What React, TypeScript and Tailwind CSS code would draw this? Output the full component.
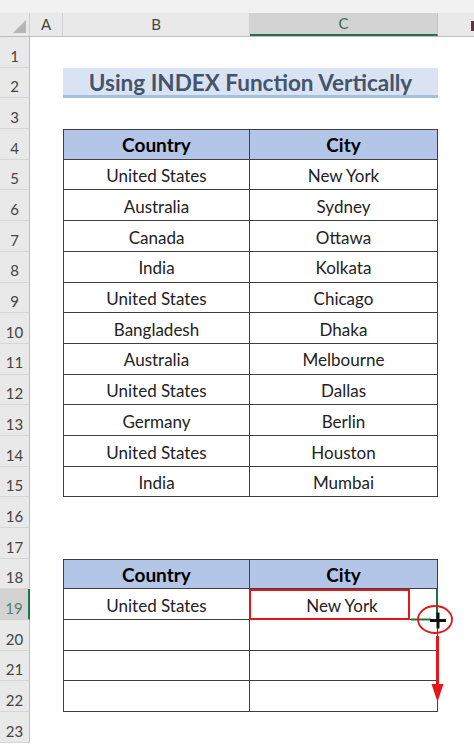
import React from "react";

const top = [
  ["United States", "New York"],
  ["Australia", "Sydney"],
  ["Canada", "Ottawa"],
  ["India", "Kolkata"],
  ["United States", "Chicago"],
  ["Bangladesh", "Dhaka"],
  ["Australia", "Melbourne"],
  ["United States", "Dallas"],
  ["Germany", "Berlin"],
  ["United States", "Houston"],
  ["India", "Mumbai"],
];

function Row({ n, active, children }: { n: number; active?: boolean; children?: React.ReactNode }) {
  return (
    <div className="flex h-[30.7px] shrink-0">
      <div
        className={
          active
            ? "w-[30px] shrink-0 flex items-center justify-center pt-[8px] border-b border-b-[#d0d0d0] border-r-2 border-r-[#217346] bg-[#d3d3d3] text-[#5c7c68] text-[15px]"
            : "w-[30px] shrink-0 flex items-center justify-center pt-[8px] border-b border-b-[#d6d6d6] border-r border-r-[#bdbdbd] bg-[#e9e9e9] text-[#444] text-[15px]"
        }
      >
        {n}
      </div>
      <div className="w-[33px] shrink-0" />
      {children}
    </div>
  );
}

function HeadCells({ first }: { first?: boolean }) {
  return (
    <>
      <div
        className={
          "w-[187px] shrink-0 flex items-center justify-center pt-[2px] bg-[#b4c6e7] border-l border-r border-b border-[#3f3f3f] text-[19px] font-bold text-black " +
          (first ? "border-t" : "")
        }
      >
        Country
      </div>
      <div className="w-[188px] shrink-0 flex items-center justify-center pt-[2px] bg-[#b4c6e7] border-r border-b border-t border-[#3f3f3f] text-[19px] font-bold text-black">
        City
      </div>
    </>
  );
}

function DataCells({ a, b }: { a: string; b: string }) {
  return (
    <>
      <div className="w-[187px] shrink-0 flex items-center justify-center pt-[3px] border-l border-r border-b border-[#3f3f3f] text-[17px] text-[#222]">
        {a}
      </div>
      <div className="w-[188px] shrink-0 flex items-center justify-center pt-[3px] border-r border-b border-[#3f3f3f] text-[17px] text-[#222]">
        {b}
      </div>
    </>
  );
}

export default function App() {
  return (
    <div className="w-[474px] h-[745px] overflow-hidden bg-white flex flex-col font-['Lato',sans-serif]">
      <div className="h-[13px] shrink-0 bg-[#f1f1f1]" />
      {/* column headers */}
      <div className="flex h-[24px] shrink-0 bg-[#e9e9e9] border-b border-[#bdbdbd] text-[15px] text-[#444]">
        <div className="w-[30px] shrink-0 relative border-r border-[#cfcfcf]">
          <svg className="absolute left-0 top-0" width="30" height="24" viewBox="0 0 30 24">
            <polygon points="26,7 26,20 13,20" fill="#b5b5b5" />
          </svg>
        </div>
        <div className="w-[33px] shrink-0 flex items-center justify-center border-r border-[#d0d0d0]">A</div>
        <div className="w-[187px] shrink-0 flex items-center justify-center border-r border-[#d0d0d0]">B</div>
        <div className="w-[188px] shrink-0 flex items-center justify-center bg-[#d3d3d3] border-b-2 border-[#217346] border-r border-r-[#c4c4c4] text-[#3f6b52]">
          C
        </div>
        <div className="flex-1 relative">
          <div className="absolute right-0 top-[8px] w-[3px] h-[10px] bg-[#6b2c44]" />
        </div>
      </div>

      <Row n={1} />
      <Row n={2}>
        <div className="w-[375px] shrink-0 flex items-center justify-center pt-[2px] bg-[#dae3f3] border-b-[3px] border-[#a3c0e3] text-[22.5px] font-bold text-[#44546a]">
          Using INDEX Function Vertically
        </div>
      </Row>
      <Row n={3} />
      <Row n={4}>
        <HeadCells first />
      </Row>
      {top.map((r, i) => (
        <Row key={i} n={5 + i}>
          <DataCells a={r[0]} b={r[1]} />
        </Row>
      ))}
      <Row n={16} />
      <Row n={17} />
      <Row n={18}>
        <HeadCells first />
      </Row>
      <Row n={19} active>
        <div className="w-[187px] shrink-0 flex items-center justify-center pt-[3px] border-l border-r border-b border-[#3f3f3f] text-[17px] text-[#222]">
          United States
        </div>
        <div className="w-[188px] shrink-0 relative flex items-center justify-center pt-[3px] border-r-2 border-r-[#217346] border-b border-b-[#3f3f3f] text-[17px] text-[#222]">
          <span className="mr-[2px]">New York</span>
          <div className="absolute left-[-1px] top-0 w-[161px] h-[31px] border-2 border-[#e8161b] pointer-events-none" />
          <svg
            className="absolute left-0 top-0 overflow-visible pointer-events-none z-10"
            width="220"
            height="130"
            viewBox="0 0 220 130"
          >
            <rect x="161" y="29.5" width="20" height="2" fill="#217346" />
            <ellipse cx="185" cy="30.5" rx="17" ry="13.5" fill="none" stroke="#e8161b" strokeWidth="1.8" />
            <line x1="180" y1="31.5" x2="196" y2="31.5" stroke="#111" strokeWidth="3" />
            <line x1="188" y1="23.5" x2="188" y2="39.5" stroke="#111" strokeWidth="3" />
            <line x1="187.5" y1="47" x2="187.5" y2="97" stroke="#e8161b" strokeWidth="3" />
            <polygon points="181.5,95 193.5,95 187.5,113" fill="#e8161b" />
          </svg>
        </div>
      </Row>
      <Row n={20}>
        <DataCells a="" b="" />
      </Row>
      <Row n={21}>
        <DataCells a="" b="" />
      </Row>
      <Row n={22}>
        <DataCells a="" b="" />
      </Row>
      <Row n={23} />
    </div>
  );
}
